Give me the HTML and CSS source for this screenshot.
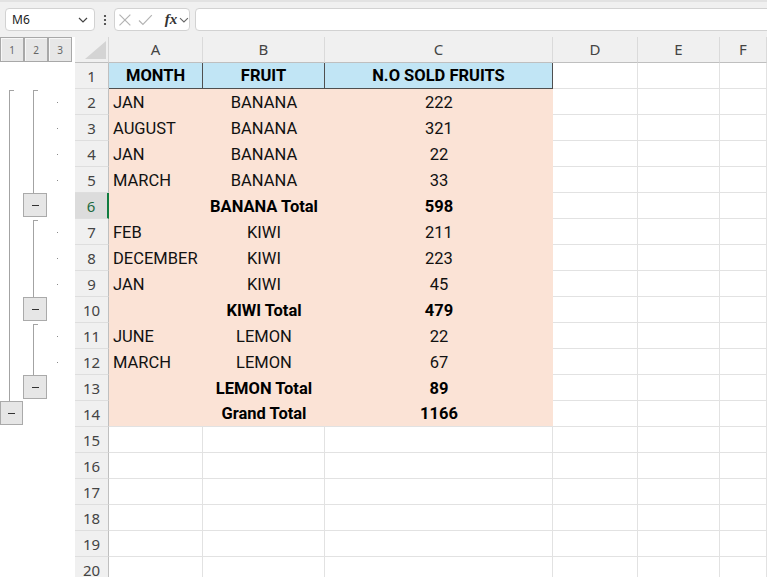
FILE: index.html
```html
<!DOCTYPE html>
<html>
<head>
<meta charset="utf-8">
<link rel="stylesheet" href="styles.css">
</head>
<body>
<div class="toolbar">
  <div class="namebox"><span>M6</span>
    <svg class="chev" width="10" height="6" viewBox="0 0 10 6"><path d="M1 1 L5 5 L9 1" fill="none" stroke="#444" stroke-width="1.2"/></svg>
  </div>
  <div class="kebab">
    <svg width="4" height="12" viewBox="0 0 4 12"><circle cx="2" cy="2" r="1.1" fill="#333"/><circle cx="2" cy="6" r="1.1" fill="#333"/><circle cx="2" cy="10" r="1.1" fill="#333"/></svg>
  </div>
  <div class="fxbox">
    <svg width="14" height="14" viewBox="0 0 14 14"><path d="M1.5 1.5 L12.5 12.5 M12.5 1.5 L1.5 12.5" stroke="#b3b3b3" stroke-width="1.2" fill="none"/></svg>
    <svg width="15" height="14" viewBox="0 0 15 14"><path d="M1 7.5 L5 11.5 L14 2" stroke="#b3b3b3" stroke-width="1.2" fill="none"/></svg>
    <span class="fx">fx</span>
    <svg width="10" height="6" viewBox="0 0 10 6"><path d="M1 1 L5 5 L9 1" fill="none" stroke="#666" stroke-width="1.1"/></svg>
  </div>
  <div class="formula"></div>
</div>

<div class="main">
  <div class="outline">
    <div class="levels"><div class="lvl">1</div><div class="lvl">2</div><div class="lvl">3</div></div>

    <div class="br l1" style="grid-row: 3 / 15;"></div>
    <div class="ob l1b" style="grid-row: 15;"><span class="minus"></span></div>

    <div class="br l2" style="grid-row: 3 / 7;"></div>
    <div class="ob l2b" style="grid-row: 7;"><span class="minus"></span></div>
    <div class="br l2" style="grid-row: 8 / 11;"></div>
    <div class="ob l2b" style="grid-row: 11;"><span class="minus"></span></div>
    <div class="br l2" style="grid-row: 12 / 14;"></div>
    <div class="ob l2b" style="grid-row: 14;"><span class="minus"></span></div>

    <div class="dot" style="grid-row: 3;"></div>
    <div class="dot" style="grid-row: 4;"></div>
    <div class="dot" style="grid-row: 5;"></div>
    <div class="dot" style="grid-row: 6;"></div>
    <div class="dot" style="grid-row: 8;"></div>
    <div class="dot" style="grid-row: 9;"></div>
    <div class="dot" style="grid-row: 10;"></div>
    <div class="dot" style="grid-row: 12;"></div>
    <div class="dot" style="grid-row: 13;"></div>
  </div>

  <div class="sheet">
    <div class="corner"><svg width="22" height="19" viewBox="0 0 22 19"><path d="M21 0 L21 18 L0 18 Z" fill="#d4d4d4"/></svg></div>
    <div class="ch">A</div><div class="ch">B</div><div class="ch">C</div><div class="ch">D</div><div class="ch">E</div><div class="ch">F</div>

    <div class="rh">1</div><div class="hd">MONTH</div><div class="hd">FRUIT</div><div class="hd">N.O SOLD FRUITS</div><div class="c"></div><div class="c"></div><div class="c"></div>

    <div class="rh">2</div><div class="p l">JAN</div><div class="p">BANANA</div><div class="p">222</div><div class="c"></div><div class="c"></div><div class="c"></div>
    <div class="rh">3</div><div class="p l">AUGUST</div><div class="p">BANANA</div><div class="p">321</div><div class="c"></div><div class="c"></div><div class="c"></div>
    <div class="rh">4</div><div class="p l">JAN</div><div class="p">BANANA</div><div class="p">22</div><div class="c"></div><div class="c"></div><div class="c"></div>
    <div class="rh">5</div><div class="p l">MARCH</div><div class="p">BANANA</div><div class="p">33</div><div class="c"></div><div class="c"></div><div class="c"></div>
    <div class="rh sel">6</div><div class="p l"></div><div class="p b">BANANA Total</div><div class="p b">598</div><div class="c"></div><div class="c"></div><div class="c"></div>
    <div class="rh">7</div><div class="p l">FEB</div><div class="p">KIWI</div><div class="p">211</div><div class="c"></div><div class="c"></div><div class="c"></div>
    <div class="rh">8</div><div class="p l">DECEMBER</div><div class="p">KIWI</div><div class="p">223</div><div class="c"></div><div class="c"></div><div class="c"></div>
    <div class="rh">9</div><div class="p l">JAN</div><div class="p">KIWI</div><div class="p">45</div><div class="c"></div><div class="c"></div><div class="c"></div>
    <div class="rh">10</div><div class="p l"></div><div class="p b">KIWI Total</div><div class="p b">479</div><div class="c"></div><div class="c"></div><div class="c"></div>
    <div class="rh">11</div><div class="p l">JUNE</div><div class="p">LEMON</div><div class="p">22</div><div class="c"></div><div class="c"></div><div class="c"></div>
    <div class="rh">12</div><div class="p l">MARCH</div><div class="p">LEMON</div><div class="p">67</div><div class="c"></div><div class="c"></div><div class="c"></div>
    <div class="rh">13</div><div class="p l"></div><div class="p b">LEMON Total</div><div class="p b">89</div><div class="c"></div><div class="c"></div><div class="c"></div>
    <div class="rh">14</div><div class="p l last"></div><div class="p b last">Grand Total</div><div class="p b last">1166</div><div class="c"></div><div class="c"></div><div class="c"></div>

    <div class="rh">15</div><div class="c"></div><div class="c"></div><div class="c"></div><div class="c"></div><div class="c"></div><div class="c"></div>
    <div class="rh">16</div><div class="c"></div><div class="c"></div><div class="c"></div><div class="c"></div><div class="c"></div><div class="c"></div>
    <div class="rh">17</div><div class="c"></div><div class="c"></div><div class="c"></div><div class="c"></div><div class="c"></div><div class="c"></div>
    <div class="rh">18</div><div class="c"></div><div class="c"></div><div class="c"></div><div class="c"></div><div class="c"></div><div class="c"></div>
    <div class="rh">19</div><div class="c"></div><div class="c"></div><div class="c"></div><div class="c"></div><div class="c"></div><div class="c"></div>
    <div class="rh">20</div><div class="c"></div><div class="c"></div><div class="c"></div><div class="c"></div><div class="c"></div><div class="c"></div>
  </div>
</div>
</body>
</html>
```

FILE: styles.css
```css
html, body {
  margin: 0;
  padding: 0;
}
body {
  width: 767px;
  height: 577px;
  overflow: hidden;
  background: #ffffff;
  font-family: "Noto Sans", "Open Sans", sans-serif;
}

/* toolbar */
.toolbar {
  height: 37px;
  box-sizing: border-box;
  background: #f0f0f0;
  border-top: 2px solid #e2e2e2;
  padding: 6px 0 0 5px;
  display: flex;
  align-items: flex-start;
}
.namebox {
  width: 90px;
  height: 23px;
  box-sizing: border-box;
  background: #fff;
  border: 1px solid #d2d2d2;
  border-radius: 4px;
  display: flex;
  align-items: center;
  justify-content: space-between;
  padding: 0 6px 0 6px;
  font-size: 12px;
  color: #222;
}
.kebab {
  width: 19px;
  height: 23px;
  display: flex;
  align-items: center;
  justify-content: center;
}
.fxbox {
  width: 76px;
  height: 23px;
  box-sizing: border-box;
  background: #fff;
  border: 1px solid #d2d2d2;
  border-radius: 4px;
  display: flex;
  align-items: center;
  padding-left: 3px;
  gap: 6px;
}
.fx {
  font-family: "Liberation Serif", "DejaVu Serif", serif;
  font-style: italic;
  font-weight: bold;
  font-size: 15px;
  color: #333;
  margin-left: 6px;
  margin-right: -4px;
  line-height: 1;
}
.formula {
  flex: 1;
  height: 23px;
  box-sizing: border-box;
  margin-left: 5px;
  margin-right: -6px;
  background: #fff;
  border: 1px solid #d2d2d2;
  border-radius: 4px;
}

/* main area */
.main {
  display: flex;
}

/* outline gutter */
.outline {
  width: 75px;
  flex: none;
  display: grid;
  grid-template-columns: 23px 24px 28px;
  grid-auto-rows: 26px;
  background: #fff;
}
.levels {
  grid-column: 1 / -1;
  grid-row: 1;
  display: flex;
  height: 25px;
}
.lvl {
  width: 24px;
  height: 25px;
  box-sizing: border-box;
  background: #e7e7e7;
  border: 1px solid #a8a8a8;
  box-shadow: inset 1px 1px 0 #f7f7f7;
  font-size: 10px;
  color: #666;
  display: flex;
  align-items: center;
  justify-content: center;
}
.br {
  margin-top: 1px;
  width: 4px;
  border-left: 1px solid #a3a3a3;
  border-top: 1px solid #a3a3a3;
}
.br.l1 { grid-column: 1; margin-left: 9px; }
.br.l2 { grid-column: 2; margin-left: 10px; }
.ob {
  height: 24px;
  box-sizing: border-box;
  background: #e6e6e6;
  border: 1px solid #aaaaaa;
  display: flex;
  align-items: center;
  justify-content: center;
}
.l1b { grid-column: 1; width: 23px; }
.l2b { grid-column: 2; width: 24px; }
.minus {
  width: 7px;
  height: 1px;
  background: #333;
}
.dot {
  grid-column: 3;
  width: 1px;
  height: 1px;
  background: #8a8a8a;
  margin-left: 10px;
  align-self: center;
}

/* sheet */
.sheet {
  flex: 1;
  display: grid;
  grid-template-columns: 34px 94px 122px 228px 85px 82px 1fr;
  grid-auto-rows: 26px;
  font-family: Roboto, "Liberation Sans", sans-serif;
  font-size: 16.5px;
  color: #111;
}
.sheet > div {
  box-sizing: border-box;
}
.corner {
  background: #f0f0f0;
  border-right: 1px solid #d6d6d6;
  border-bottom: 1px solid #bfbfbf;
  display: flex;
  align-items: flex-end;
  justify-content: flex-end;
  padding: 0 1px 2px 0;
}
.ch {
  background: #f0f0f0;
  border-right: 1px solid #dadada;
  border-bottom: 1px solid #bfbfbf;
  font-family: "Noto Sans", "Open Sans", sans-serif;
  font-size: 15px;
  color: #444;
  text-align: center;
  line-height: 25px;
}
.rh {
  background: #f0f0f0;
  border-right: 1px solid #bfbfbf;
  border-bottom: 1px solid #dedede;
  font-family: "Noto Sans", "Open Sans", sans-serif;
  font-size: 15px;
  color: #444;
  text-align: center;
  line-height: 25px;
  padding-top: 1px;
}
.rh.sel {
  background: #dcdcdc;
  color: #1d6b40;
  border-right: 2px solid #107c41;
}
.c {
  background: #fff;
  border-right: 1px solid #e2e2e2;
  border-bottom: 1px solid #e2e2e2;
}
.hd {
  background: #c1e5f5;
  border-right: 1px solid #4f4f4f;
  border-bottom: 1px solid #4f4f4f;
  font-weight: bold;
  color: #000;
  text-align: center;
  line-height: 24px;
  padding-top: 1px;
}
.p {
  background: #fbe3d6;
  text-align: center;
  line-height: 25px;
  padding-top: 1px;
  white-space: nowrap;
}
.p.l {
  text-align: left;
  padding-left: 4px;
}
.p.last {
  border-bottom: 1px solid #e2e2e2;
  line-height: 24px;
}
.b {
  font-weight: bold;
  color: #000;
}
```
